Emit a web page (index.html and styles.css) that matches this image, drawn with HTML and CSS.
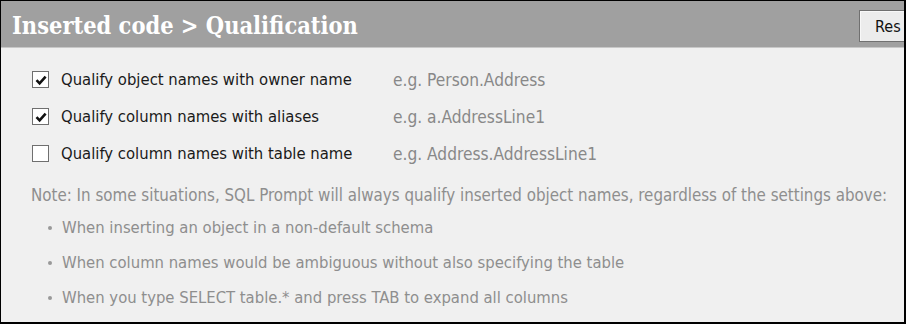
FILE: index.html
```html
<!DOCTYPE html>
<html>
<head>
<meta charset="utf-8">
<link rel="stylesheet" href="styles.css">
</head>
<body>
<div class="frame">
  <div class="header">
    <h1 class="title">Inserted code &gt; Qualification</h1>
    <button class="reset">Res</button>
  </div>
  <div class="content">
    <div class="opt">
      <span class="box checked"><svg viewBox="0 0 16 16" width="16" height="16"><path d="M3.5 8.2 L6.6 11.3 L12.6 4.6" fill="none" stroke="#111" stroke-width="2.6"/></svg></span>
      <span class="label">Qualify object names with owner name</span>
      <span class="example">e.g. Person.Address</span>
    </div>
    <div class="opt">
      <span class="box checked"><svg viewBox="0 0 16 16" width="16" height="16"><path d="M3.5 8.2 L6.6 11.3 L12.6 4.6" fill="none" stroke="#111" stroke-width="2.6"/></svg></span>
      <span class="label">Qualify column names with aliases</span>
      <span class="example">e.g. a.AddressLine1</span>
    </div>
    <div class="opt">
      <span class="box"></span>
      <span class="label">Qualify column names with table name</span>
      <span class="example">e.g. Address.AddressLine1</span>
    </div>
    <p class="note">Note: In some situations, SQL Prompt will always qualify inserted object names, regardless of the settings above:</p>
    <ul class="bullets">
      <li>When inserting an object in a non-default schema</li>
      <li>When column names would be ambiguous without also specifying the table</li>
      <li>When you type SELECT table.* and press TAB to expand all columns</li>
    </ul>
  </div>
</div>
</body>
</html>
```

FILE: styles.css
```css
html, body {
  margin: 0;
  padding: 0;
  background: #000;
}
.frame {
  width: 903px;
  height: 321px;
  margin: 1px 2px 2px 1px;
  background: #f0f0f0;
  overflow: hidden;
  display: flex;
  flex-direction: column;
  font-family: "DejaVu Sans Condensed", "DejaVu Sans", sans-serif;
}
.header {
  height: 46px;
  background: #a0a0a0;
  border-bottom: 1px solid #c8c8c8;
  display: flex;
  align-items: center;
  justify-content: space-between;
  padding-left: 11px;
  flex-shrink: 0;
}
.title {
  margin: 3px 0 0 0;
  color: #fff;
  font-family: "DejaVu Serif Condensed", "DejaVu Serif", serif;
  font-weight: bold;
  font-size: 23.4px;
  letter-spacing: 0;
}
.reset {
  width: 50px;
  height: 32px;
  margin-right: -5px;
  margin-top: 4px;
  background: #ececec;
  border: 1px solid #707070;
  border-right: none;
  box-shadow: inset 1px 1px 0 #f8f8f8;
  font-family: "DejaVu Sans Condensed", "DejaVu Sans", sans-serif;
  font-size: 16px;
  color: #111;
  text-align: left;
  padding: 0 0 0 15px;
}
.content {
  padding: 13px 0 0 31px;
}
.opt {
  display: flex;
  align-items: center;
  height: 37px;
}
.box {
  width: 17px;
  height: 17px;
  box-sizing: border-box;
  border: 1px solid #6f6f6f;
  background: #fff;
  display: flex;
  align-items: center;
  justify-content: center;
  margin-right: 12px;
}
.box svg {
  display: block;
  flex-shrink: 0;
}
.label {
  width: 332px;
  font-size: 16.5px;
  color: #1a1a1a;
}
.example {
  font-size: 17.2px;
  color: #888;
}
.note {
  margin: 12px 0 0 -1px;
  font-size: 16.8px;
  color: #8e8e8e;
  line-height: 22px;
  white-space: nowrap;
}
.bullets {
  margin: 4px 0 0 0;
  padding: 0 0 0 16px;
  list-style: none;
}
.bullets li {
  font-size: 16.5px;
  color: #8e8e8e;
  height: 35px;
  line-height: 35px;
  position: relative;
  padding-left: 14px;
}
.bullets li::before {
  content: "";
  position: absolute;
  left: 0;
  top: 16px;
  width: 4px;
  height: 4px;
  border-radius: 50%;
  background: #999;
}
```
